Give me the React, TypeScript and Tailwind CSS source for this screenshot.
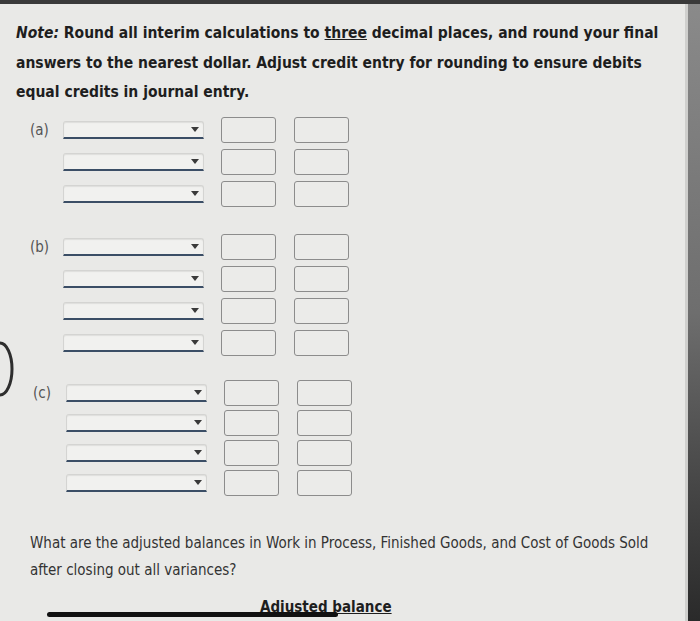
import React from 'react'

const font = { fontFamily: '"DejaVu Sans Condensed", "DejaVu Sans", Verdana, sans-serif' }

function Select() {
  return (
    <div className="relative h-[18px] w-[141px] rounded-t-[3px] border-x border-t border-[#d4d4d2] border-b-2 border-b-[#3b4e66] bg-[#f1f1ef] shadow-[inset_0_1px_1px_rgba(0,0,0,0.08)]">
      <svg className="absolute right-[4px] top-[5px]" width="8" height="6" viewBox="0 0 8 6">
        <path d="M0 0 L8 0 L4 5 Z" fill="#3a3a3a" />
      </svg>
    </div>
  )
}

function Box() {
  return <div className="h-[26px] w-[55px] rounded-[3px] border-[1.5px] border-[#8c8c8c] bg-[#ebebe9]" />
}

function Group({ label, rows, gap }: { label: string; rows: number; gap: string }) {
  return (
    <div className="flex">
      <div className="w-[33px] pl-[30px] box-content pt-[2px] text-[15px] leading-[22px] text-[#555]">{label}</div>
      <div className={`flex flex-col ${gap}`}>
        {Array.from({ length: rows }).map((_, i) => (
          <div key={i} className="flex items-center">
            <Select />
            <div className="ml-[17px] flex gap-[18px]">
              <Box />
              <Box />
            </div>
          </div>
        ))}
      </div>
    </div>
  )
}

export default function App() {
  return (
    <div className="relative flex h-[621px] w-[700px] flex-col overflow-hidden bg-[#e9e9e7]" style={font}>
      <div className="h-[4px] w-full bg-[#3a3a3a]" />
      <div className="flex flex-1">
        <div className="flex-1">
          <p className="pl-[16px] pr-[16px] pt-[15px] text-[15.5px] font-bold leading-[29.5px] text-[#1e1e1e]">
            <em>Note:</em> Round all interim calculations to <span className="underline">three</span> decimal places, and round your final answers to the nearest dollar. Adjust credit entry for rounding to ensure debits equal credits in journal entry.
          </p>
          <div className="mt-[9.5px] flex flex-col">
            <Group label="(a)" rows={3} gap="gap-[6px]" />
            <div className="h-[27px]" />
            <Group label="(b)" rows={4} gap="gap-[6px]" />
            <div className="h-[24px]" />
            <div className="pl-[3px]">
              <Group label="(c)" rows={4} gap="gap-[4px]" />
            </div>
          </div>
          <p className="mt-[34px] pl-[30px] pr-[30px] text-[15px] leading-[27px] text-[#333]">
            What are the adjusted balances in Work in Process, Finished Goods, and Cost of Goods Sold after closing out all variances?
          </p>
          <div className="mt-[13px] pl-[260px] text-[15px] font-bold leading-[20px] text-[#1e1e1e] underline">Adjusted balance</div>
        </div>
        <div className="flex w-[15px]">
          <div className="w-[3px] bg-[#cfcfcd]" />
          <div className="flex-1 bg-gradient-to-b from-[#8a8a8a] via-[#6e6e6e] to-[#2a2a2a]" />
        </div>
      </div>
      <div className="absolute left-[47px] top-[612px] h-[5px] w-[291px] rounded-full bg-[#111]" />
      <svg className="absolute left-0 top-[340px]" width="18" height="58" viewBox="0 0 18 58">
        <path d="M0 3 A 12 26 0 0 1 0 55" fill="none" stroke="#2e2e2e" strokeWidth="3" />
      </svg>
    </div>
  )
}
